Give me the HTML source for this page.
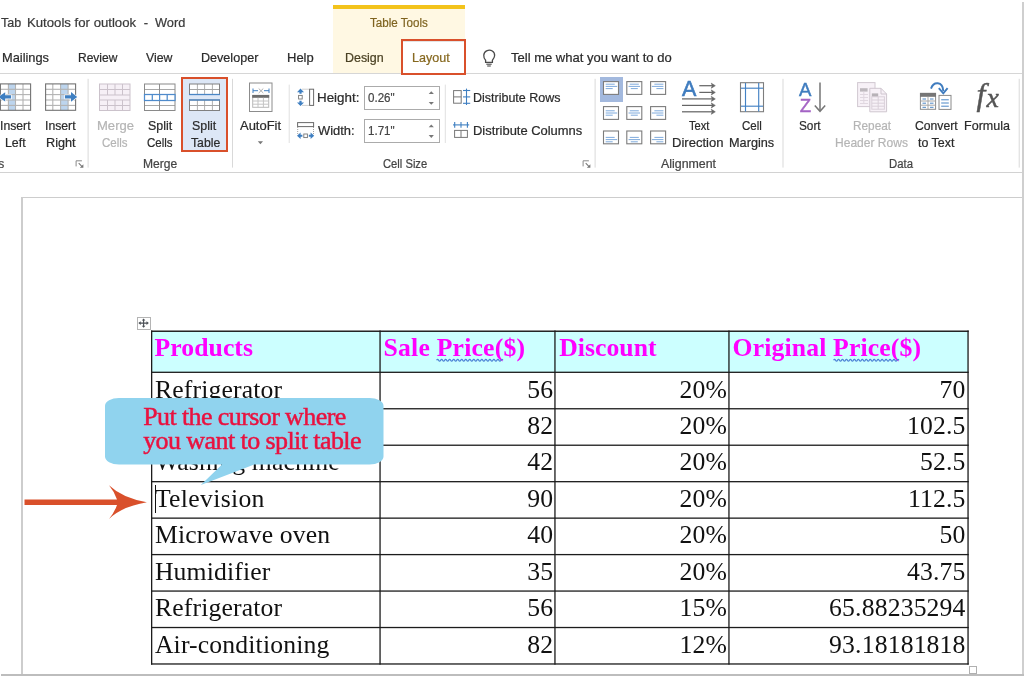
<!DOCTYPE html>
<html lang="en"><head><meta charset="utf-8"><title>Word - Split Table</title>
<style>
html,body{margin:0;padding:0;background:#fff;}
body{width:1024px;height:676px;position:relative;overflow:hidden;font-family:"Liberation Sans",sans-serif;}
.t{position:absolute;white-space:pre;line-height:1;transform-origin:0 0;-webkit-text-stroke:0.22px currentColor;}
.a{position:absolute;}
#root{position:absolute;left:0;top:0;width:1024px;height:676px;will-change:transform;}
svg{position:absolute;overflow:visible;}

.ln{position:absolute;background:#d4d4d4;}
.cell{position:absolute;white-space:pre;line-height:1;letter-spacing:0.15px;font-family:"Liberation Serif",serif;font-size:25.7px;color:#111;}
.hd{font-weight:700;color:#ff00ff;letter-spacing:0.05px;}

</style></head><body><div id="root">
<div class="a" style="left:332.5px;top:5px;width:132.5px;height:4px;background:#f3c31b;"></div>
<div class="a" style="left:332.5px;top:9px;width:132.5px;height:64px;background:#fff8e3;"></div>
<div class="a" style="left:0px;top:73px;width:1022px;height:1px;background:#d6d6d6;"></div>
<div class="a" style="left:0px;top:172px;width:1022px;height:1px;background:#d2d2d2;"></div>
<div class="a" style="left:401px;top:38.7px;width:65px;height:36px;background:#ffffff;border:2px solid #d9502b;box-sizing:border-box;"></div>
<div class="a" style="left:403px;top:40.7px;width:61px;height:1px;background:#e3e3e3;"></div>
<div class="a" style="left:1021.5px;top:2px;width:2px;height:674px;background:#cfcfcf;"></div>
<div class="a" style="left:1px;top:673.5px;width:1023px;height:2.5px;background:#bdbdbd;"></div>
<div class="a" style="left:21px;top:197px;width:1001px;height:1px;background:#cdcdcd;"></div>
<div class="a" style="left:21px;top:197px;width:1.5px;height:477px;background:#cdcdcd;"></div>
<div class="a" style="left:181px;top:77px;width:47px;height:75px;background:#dde7f6;border:2px solid #d9502b;box-sizing:border-box;"></div>
<div class="a" style="left:600px;top:77px;width:23px;height:24.5px;background:#a3b9de;"></div>
<svg style="left:0;top:0" width="1024" height="676" viewBox="0 0 1024 676"><rect x="87.60" y="78.8" width="1" height="88.8" fill="#d9d9d9"/><rect x="232.00" y="78.8" width="1" height="88.8" fill="#d9d9d9"/><rect x="594.60" y="78.8" width="1" height="88.8" fill="#d9d9d9"/><rect x="782.50" y="78.8" width="1" height="88.8" fill="#d9d9d9"/><rect x="1018.70" y="78.8" width="1" height="88.8" fill="#d9d9d9"/><rect x="288.70" y="84.6" width="1" height="58.4" fill="#e0e0e0"/><rect x="444.80" y="84.6" width="1" height="58.4" fill="#e0e0e0"/></svg>
<div class="a" style="left:364px;top:86.25px;width:76px;height:23.25px;background:#fff;border:1px solid #ababab;box-sizing:border-box;"></div>
<div class="a" style="left:364px;top:119.25px;width:76px;height:23.25px;background:#fff;border:1px solid #ababab;box-sizing:border-box;"></div>
<div class="a" style="left:151px;top:330.5px;width:817.4px;height:41.14999999999998px;background:#ccffff;"></div>
<svg style="left:0;top:0" width="1024" height="676" viewBox="0 0 1024 676"><g fill="#1c1c1c"><rect x="151" y="330.5" width="817.70" height="1.45"/><rect x="151" y="371.65" width="817.70" height="1.3"/><rect x="151" y="408.11" width="817.70" height="1.3"/><rect x="151" y="444.57" width="817.70" height="1.3"/><rect x="151" y="481.03" width="817.70" height="1.3"/><rect x="151" y="517.49" width="817.70" height="1.3"/><rect x="151" y="553.95" width="817.70" height="1.3"/><rect x="151" y="590.41" width="817.70" height="1.3"/><rect x="151" y="626.87" width="817.70" height="1.3"/><rect x="151" y="663.33" width="817.70" height="1.3"/><rect x="151" y="330.5" width="1.3" height="334.13"/><rect x="379.4" y="330.5" width="1.3" height="334.13"/><rect x="554.3" y="330.5" width="1.3" height="334.13"/><rect x="728.3" y="330.5" width="1.3" height="334.13"/><rect x="967.4" y="330.5" width="1.3" height="334.13"/></g></svg>
<div class="a" style="left:137px;top:317px;width:13.5px;height:13px;background:#fff;border:1px solid #b4b4b4;box-sizing:border-box;"></div>
<svg style="left:138.4px;top:318.4px" width="11.2" height="10.2" viewBox="0 0 10 9"><path d="M5 0.3 L6.6 2.2 H5.5 V4 H7.6 V2.9 L9.7 4.5 L7.6 6.1 V5 H5.5 V6.8 H6.6 L5 8.7 L3.4 6.8 H4.5 V5 H2.4 V6.1 L0.3 4.5 L2.4 2.9 V4 H4.5 V2.2 H3.4 Z" fill="#4a4f55"/></svg>
<div class="a" style="left:969px;top:665.5px;width:8px;height:8px;background:#fff;border:1px solid #b0b0b0;box-sizing:border-box;"></div>
<svg style="left:0;top:0" width="1024" height="676" viewBox="0 0 1024 676">
<rect x="0.4" y="83.9" width="30.200000000000003" height="26.39999999999999" fill="#fff" stroke="none" stroke-width="1" />
<rect x="8.4" y="83.9" width="7.1" height="26.39999999999999" fill="#bdd5ee" stroke="none" stroke-width="1" />
<line x1="8.4" y1="83.9" x2="8.4" y2="110.3" stroke="#b3b3b3" stroke-width="1.1" />
<line x1="15.5" y1="83.9" x2="15.5" y2="110.3" stroke="#b3b3b3" stroke-width="1.1" />
<line x1="23" y1="83.9" x2="23" y2="110.3" stroke="#b3b3b3" stroke-width="1.1" />
<line x1="0.4" y1="89.3" x2="30.6" y2="89.3" stroke="#b3b3b3" stroke-width="1.1" />
<line x1="0.4" y1="94.6" x2="30.6" y2="94.6" stroke="#b3b3b3" stroke-width="1.1" />
<line x1="0.4" y1="100" x2="30.6" y2="100" stroke="#b3b3b3" stroke-width="1.1" />
<line x1="0.4" y1="105.4" x2="30.6" y2="105.4" stroke="#b3b3b3" stroke-width="1.1" />
<rect x="0.4" y="83.9" width="30.200000000000003" height="26.39999999999999" fill="none" stroke="#737373" stroke-width="1.1" />
<path d="M11 95.2 H5.2 V92.2 L-1.8 96.9 L5.2 101.6 V98.6 H11 Z" fill="#3f7fc1" stroke="#fff" stroke-width="1.3" paint-order="stroke"/>
<rect x="45.6" y="83.9" width="29.999999999999993" height="26.39999999999999" fill="#fff" stroke="none" stroke-width="1" />
<rect x="60.6" y="83.9" width="7.499999999999993" height="26.39999999999999" fill="#bdd5ee" stroke="none" stroke-width="1" />
<line x1="52.8" y1="83.9" x2="52.8" y2="110.3" stroke="#b3b3b3" stroke-width="1.1" />
<line x1="60.6" y1="83.9" x2="60.6" y2="110.3" stroke="#b3b3b3" stroke-width="1.1" />
<line x1="68.1" y1="83.9" x2="68.1" y2="110.3" stroke="#b3b3b3" stroke-width="1.1" />
<line x1="45.6" y1="89.3" x2="75.6" y2="89.3" stroke="#b3b3b3" stroke-width="1.1" />
<line x1="45.6" y1="94.6" x2="75.6" y2="94.6" stroke="#b3b3b3" stroke-width="1.1" />
<line x1="45.6" y1="100" x2="75.6" y2="100" stroke="#b3b3b3" stroke-width="1.1" />
<line x1="45.6" y1="105.4" x2="75.6" y2="105.4" stroke="#b3b3b3" stroke-width="1.1" />
<rect x="45.6" y="83.9" width="29.999999999999993" height="26.39999999999999" fill="none" stroke="#737373" stroke-width="1.1" />
<path d="M65 95.2 H71 V92 L77.2 96.9 L71 101.8 V98.6 H65 Z" fill="#3f7fc1" stroke="#fff" stroke-width="1.3" paint-order="stroke"/>
<rect x="99.5" y="84" width="30.5" height="26.5" fill="#f6f0f6" stroke="none" stroke-width="1" />
<line x1="107.5" y1="84" x2="107.5" y2="95" stroke="#cbc2cb" stroke-width="1" />
<line x1="107.5" y1="100" x2="107.5" y2="110.5" stroke="#cbc2cb" stroke-width="1" />
<line x1="115" y1="84" x2="115" y2="95" stroke="#cbc2cb" stroke-width="1" />
<line x1="115" y1="100" x2="115" y2="110.5" stroke="#cbc2cb" stroke-width="1" />
<line x1="122.5" y1="84" x2="122.5" y2="95" stroke="#cbc2cb" stroke-width="1" />
<line x1="122.5" y1="100" x2="122.5" y2="110.5" stroke="#cbc2cb" stroke-width="1" />
<line x1="99.5" y1="89.5" x2="130" y2="89.5" stroke="#cbc2cb" stroke-width="1" />
<line x1="99.5" y1="95" x2="130" y2="95" stroke="#cbc2cb" stroke-width="1" />
<line x1="99.5" y1="100" x2="130" y2="100" stroke="#cbc2cb" stroke-width="1" />
<line x1="99.5" y1="105.5" x2="130" y2="105.5" stroke="#cbc2cb" stroke-width="1" />
<rect x="99.5" y="84" width="30.5" height="26.5" fill="none" stroke="#cbc2cb" stroke-width="1" />
<rect x="144.5" y="84" width="30.5" height="26.5" fill="#fff" stroke="none" stroke-width="1" />
<line x1="144.5" y1="89.5" x2="175" y2="89.5" stroke="#a9a9a9" stroke-width="1" />
<line x1="144.5" y1="105.5" x2="175" y2="105.5" stroke="#a9a9a9" stroke-width="1" />
<line x1="159.5" y1="84" x2="159.5" y2="110.5" stroke="#8e8e8e" stroke-width="1" />
<rect x="144.5" y="84" width="30.5" height="26.5" fill="none" stroke="#8a8a8a" stroke-width="1" />
<rect x="144.5" y="94.5" width="30.5" height="6" fill="#fff" stroke="#4f8bcb" stroke-width="1.25" />
<line x1="152.3" y1="94.5" x2="152.3" y2="100.5" stroke="#4f8bcb" stroke-width="1.25" />
<line x1="159.6" y1="94.5" x2="159.6" y2="100.5" stroke="#4f8bcb" stroke-width="1.25" />
<line x1="167.2" y1="94.5" x2="167.2" y2="100.5" stroke="#4f8bcb" stroke-width="1.25" />
<rect x="189.5" y="84" width="30" height="10.5" fill="#fff" stroke="none" stroke-width="1" />
<line x1="197.4" y1="84" x2="197.4" y2="94.5" stroke="#b0b0b0" stroke-width="1" />
<line x1="204.6" y1="84" x2="204.6" y2="94.5" stroke="#b0b0b0" stroke-width="1" />
<line x1="212.4" y1="84" x2="212.4" y2="94.5" stroke="#b0b0b0" stroke-width="1" />
<line x1="189.5" y1="89.5" x2="219.5" y2="89.5" stroke="#a5a5a5" stroke-width="1" />
<rect x="189.5" y="84" width="30" height="10.5" fill="none" stroke="#808080" stroke-width="1" />
<line x1="189" y1="94.5" x2="220" y2="94.5" stroke="#4a86c5" stroke-width="1.3" />
<rect x="189.5" y="100" width="30" height="10.5" fill="#fff" stroke="none" stroke-width="1" />
<line x1="197.4" y1="100" x2="197.4" y2="110.5" stroke="#b0b0b0" stroke-width="1" />
<line x1="204.6" y1="100" x2="204.6" y2="110.5" stroke="#b0b0b0" stroke-width="1" />
<line x1="212.4" y1="100" x2="212.4" y2="110.5" stroke="#b0b0b0" stroke-width="1" />
<line x1="189.5" y1="105.5" x2="219.5" y2="105.5" stroke="#a5a5a5" stroke-width="1" />
<rect x="189.5" y="100" width="30" height="10.5" fill="none" stroke="#808080" stroke-width="1" />
<line x1="189" y1="100" x2="220" y2="100" stroke="#4a86c5" stroke-width="1.3" />
<rect x="249.5" y="83" width="22.5" height="28.5" fill="#fff" stroke="#8c8c8c" stroke-width="1" />
<line x1="253" y1="88.5" x2="253" y2="93" stroke="#3f7fc1" stroke-width="1" />
<line x1="269" y1="88.5" x2="269" y2="93" stroke="#3f7fc1" stroke-width="1" />
<line x1="253" y1="90.7" x2="258" y2="90.7" stroke="#3f7fc1" stroke-width="1" />
<line x1="264" y1="90.7" x2="269" y2="90.7" stroke="#3f7fc1" stroke-width="1" />
<line x1="258.7" y1="88.5" x2="263.3" y2="93" stroke="#9a9a9a" stroke-width="0.8" />
<line x1="263.3" y1="88.5" x2="258.7" y2="93" stroke="#9a9a9a" stroke-width="0.8" />
<rect x="252.7" y="95.3" width="16" height="12" fill="#fff" stroke="#b9b9b9" stroke-width="1" />
<rect x="252.2" y="95" width="17" height="2.8" fill="#6d6d6d" stroke="none" stroke-width="1" />
<line x1="258" y1="97.8" x2="258" y2="107.3" stroke="#c4c4c4" stroke-width="1" />
<line x1="263.4" y1="97.8" x2="263.4" y2="107.3" stroke="#c4c4c4" stroke-width="1" />
<line x1="252.7" y1="101" x2="268.7" y2="101" stroke="#c4c4c4" stroke-width="1" />
<line x1="252.7" y1="104.2" x2="268.7" y2="104.2" stroke="#c4c4c4" stroke-width="1" />
<path d="M257.8 141.3 H263 L260.4 144.3 Z" fill="#777" stroke="none" stroke-width="1" />
<path d="M300.5 88.6 L304 92.2 H301.6 V93.8 H299.4 V92.2 H297 Z" fill="#3f7fc1" stroke="none" stroke-width="1" />
<path d="M300.5 106 L304 102.4 H301.6 V100.8 H299.4 V102.4 H297 Z" fill="#3f7fc1" stroke="none" stroke-width="1" />
<rect x="298.6" y="95.4" width="3.6" height="3.6" fill="#fff" stroke="#777" stroke-width="0.9" />
<line x1="302.5" y1="89.2" x2="309" y2="89.2" stroke="#8a8a8a" stroke-width="0.8" stroke-dasharray="1 1"/>
<line x1="302.5" y1="105.4" x2="309" y2="105.4" stroke="#8a8a8a" stroke-width="0.8" stroke-dasharray="1 1"/>
<rect x="309.6" y="89.2" width="4" height="16.2" fill="#fff" stroke="#6a6a6a" stroke-width="1" />
<rect x="297.6" y="122.6" width="16" height="4" fill="#fff" stroke="#6a6a6a" stroke-width="1" />
<line x1="297.7" y1="127" x2="297.7" y2="134" stroke="#8a8a8a" stroke-width="0.8" stroke-dasharray="1 1"/>
<line x1="313.5" y1="127" x2="313.5" y2="134" stroke="#8a8a8a" stroke-width="0.8" stroke-dasharray="1 1"/>
<path d="M297 135.8 L300.6 132.6 V134.8 H302.4 V136.8 H300.6 V139 Z" fill="#3f7fc1" stroke="none" stroke-width="1" />
<path d="M314.2 135.8 L310.6 132.6 V134.8 H308.8 V136.8 H310.6 V139 Z" fill="#3f7fc1" stroke="none" stroke-width="1" />
<rect x="303.8" y="134" width="3.6" height="3.6" fill="#fff" stroke="#777" stroke-width="0.9" />
<path d="M428.7 94.0 L431.3 91.2 L433.9 94.0 Z" fill="#777" stroke="none" stroke-width="1" />
<path d="M428.7 102.0 L431.3 104.8 L433.9 102.0 Z" fill="#777" stroke="none" stroke-width="1" />
<path d="M428.7 127.2 L431.3 124.4 L433.9 127.2 Z" fill="#777" stroke="none" stroke-width="1" />
<path d="M428.7 135.1 L431.3 137.9 L433.9 135.1 Z" fill="#777" stroke="none" stroke-width="1" />
<rect x="453.6" y="90.6" width="7.6" height="12.6" fill="none" stroke="#777" stroke-width="1" />
<line x1="453.6" y1="96.9" x2="461.2" y2="96.9" stroke="#777" stroke-width="1" />
<line x1="466.5" y1="88.6" x2="466.5" y2="105" stroke="#3f7fc1" stroke-width="1.1" />
<line x1="463" y1="90.5" x2="470.2" y2="90.5" stroke="#3f7fc1" stroke-width="1.1" />
<line x1="463" y1="96.9" x2="470.2" y2="96.9" stroke="#3f7fc1" stroke-width="1.1" />
<line x1="463" y1="103.3" x2="470.2" y2="103.3" stroke="#3f7fc1" stroke-width="1.1" />
<line x1="453" y1="124.9" x2="469.2" y2="124.9" stroke="#3f7fc1" stroke-width="1.1" />
<line x1="454.7" y1="121.9" x2="454.7" y2="127.8" stroke="#3f7fc1" stroke-width="1.1" />
<line x1="461" y1="121.9" x2="461" y2="127.8" stroke="#3f7fc1" stroke-width="1.1" />
<line x1="467.4" y1="121.9" x2="467.4" y2="127.8" stroke="#3f7fc1" stroke-width="1.1" />
<rect x="454.6" y="130.4" width="12.8" height="7" fill="none" stroke="#777" stroke-width="1" />
<line x1="461" y1="130.4" x2="461" y2="137.4" stroke="#777" stroke-width="1" />
<rect x="603.5" y="81.6" width="15" height="12.8" fill="#fff" stroke="#7c7c7c" stroke-width="1.1" />
<line x1="605.7" y1="84.19999999999999" x2="614.7" y2="84.19999999999999" stroke="#6fa0d8" stroke-width="0.9" />
<line x1="605.7" y1="86.39999999999999" x2="617.2" y2="86.39999999999999" stroke="#6fa0d8" stroke-width="0.9" />
<line x1="605.7" y1="88.6" x2="612.7" y2="88.6" stroke="#6fa0d8" stroke-width="0.9" />
<rect x="626.8" y="81.6" width="15" height="12.8" fill="#fff" stroke="#7c7c7c" stroke-width="1.1" />
<line x1="629.8" y1="84.19999999999999" x2="638.8" y2="84.19999999999999" stroke="#6fa0d8" stroke-width="0.9" />
<line x1="628.55" y1="86.39999999999999" x2="640.05" y2="86.39999999999999" stroke="#6fa0d8" stroke-width="0.9" />
<line x1="630.8" y1="88.6" x2="637.8" y2="88.6" stroke="#6fa0d8" stroke-width="0.9" />
<rect x="650.6" y="81.6" width="15" height="12.8" fill="#fff" stroke="#7c7c7c" stroke-width="1.1" />
<line x1="654.4" y1="84.19999999999999" x2="663.4" y2="84.19999999999999" stroke="#6fa0d8" stroke-width="0.9" />
<line x1="651.9" y1="86.39999999999999" x2="663.4" y2="86.39999999999999" stroke="#6fa0d8" stroke-width="0.9" />
<line x1="656.4" y1="88.6" x2="663.4" y2="88.6" stroke="#6fa0d8" stroke-width="0.9" />
<rect x="603.5" y="106.6" width="15" height="12.8" fill="#fff" stroke="#7c7c7c" stroke-width="1.1" />
<line x1="605.7" y1="110.8" x2="614.7" y2="110.8" stroke="#6fa0d8" stroke-width="0.9" />
<line x1="605.7" y1="113.0" x2="617.2" y2="113.0" stroke="#6fa0d8" stroke-width="0.9" />
<line x1="605.7" y1="115.19999999999999" x2="612.7" y2="115.19999999999999" stroke="#6fa0d8" stroke-width="0.9" />
<rect x="626.8" y="106.6" width="15" height="12.8" fill="#fff" stroke="#7c7c7c" stroke-width="1.1" />
<line x1="629.8" y1="110.8" x2="638.8" y2="110.8" stroke="#6fa0d8" stroke-width="0.9" />
<line x1="628.55" y1="113.0" x2="640.05" y2="113.0" stroke="#6fa0d8" stroke-width="0.9" />
<line x1="630.8" y1="115.19999999999999" x2="637.8" y2="115.19999999999999" stroke="#6fa0d8" stroke-width="0.9" />
<rect x="650.6" y="106.6" width="15" height="12.8" fill="#fff" stroke="#7c7c7c" stroke-width="1.1" />
<line x1="654.4" y1="110.8" x2="663.4" y2="110.8" stroke="#6fa0d8" stroke-width="0.9" />
<line x1="651.9" y1="113.0" x2="663.4" y2="113.0" stroke="#6fa0d8" stroke-width="0.9" />
<line x1="656.4" y1="115.19999999999999" x2="663.4" y2="115.19999999999999" stroke="#6fa0d8" stroke-width="0.9" />
<rect x="603.5" y="131" width="15" height="12.8" fill="#fff" stroke="#7c7c7c" stroke-width="1.1" />
<line x1="605.7" y1="137.4" x2="614.7" y2="137.4" stroke="#6fa0d8" stroke-width="0.9" />
<line x1="605.7" y1="139.6" x2="617.2" y2="139.6" stroke="#6fa0d8" stroke-width="0.9" />
<line x1="605.7" y1="141.8" x2="612.7" y2="141.8" stroke="#6fa0d8" stroke-width="0.9" />
<rect x="626.8" y="131" width="15" height="12.8" fill="#fff" stroke="#7c7c7c" stroke-width="1.1" />
<line x1="629.8" y1="137.4" x2="638.8" y2="137.4" stroke="#6fa0d8" stroke-width="0.9" />
<line x1="628.55" y1="139.6" x2="640.05" y2="139.6" stroke="#6fa0d8" stroke-width="0.9" />
<line x1="630.8" y1="141.8" x2="637.8" y2="141.8" stroke="#6fa0d8" stroke-width="0.9" />
<rect x="650.6" y="131" width="15" height="12.8" fill="#fff" stroke="#7c7c7c" stroke-width="1.1" />
<line x1="654.4" y1="137.4" x2="663.4" y2="137.4" stroke="#6fa0d8" stroke-width="0.9" />
<line x1="651.9" y1="139.6" x2="663.4" y2="139.6" stroke="#6fa0d8" stroke-width="0.9" />
<line x1="656.4" y1="141.8" x2="663.4" y2="141.8" stroke="#6fa0d8" stroke-width="0.9" />
<text x="682" y="96" font-family="'Liberation Sans',sans-serif" font-size="21.5" font-weight="400" fill="#3f7cbf" stroke="#3f7cbf" stroke-width="0.6">A</text>
<line x1="699.3" y1="85.7" x2="713" y2="85.7" stroke="#666" stroke-width="1.25" />
<path d="M711.3 83.2 L715.3 85.7 L711.3 88.2 L712.3 85.7 Z" fill="#666" stroke="#666" stroke-width="0.6" />
<line x1="699.3" y1="92.4" x2="713" y2="92.4" stroke="#666" stroke-width="1.25" />
<path d="M711.3 89.9 L715.3 92.4 L711.3 94.9 L712.3 92.4 Z" fill="#666" stroke="#666" stroke-width="0.6" />
<line x1="682" y1="98.9" x2="713" y2="98.9" stroke="#666" stroke-width="1.25" />
<path d="M711.3 96.4 L715.3 98.9 L711.3 101.4 L712.3 98.9 Z" fill="#666" stroke="#666" stroke-width="0.6" />
<line x1="682" y1="105.4" x2="713" y2="105.4" stroke="#666" stroke-width="1.25" />
<path d="M711.3 102.9 L715.3 105.4 L711.3 107.9 L712.3 105.4 Z" fill="#666" stroke="#666" stroke-width="0.6" />
<line x1="682" y1="111.8" x2="713" y2="111.8" stroke="#666" stroke-width="1.25" />
<path d="M711.3 109.3 L715.3 111.8 L711.3 114.3 L712.3 111.8 Z" fill="#666" stroke="#666" stroke-width="0.6" />
<rect x="740.5" y="82.7" width="23" height="29" fill="#fff" stroke="#7d7d7d" stroke-width="1.1" />
<line x1="745.5" y1="83" x2="745.5" y2="111.5" stroke="#4482c4" stroke-width="1.15" />
<line x1="758.7" y1="83" x2="758.7" y2="111.5" stroke="#4482c4" stroke-width="1.15" />
<line x1="741" y1="88.2" x2="763" y2="88.2" stroke="#4482c4" stroke-width="1.15" />
<line x1="741" y1="106.2" x2="763" y2="106.2" stroke="#4482c4" stroke-width="1.15" />
<text x="799" y="95.9" font-family="'Liberation Sans',sans-serif" font-size="18.6" fill="#3f7cbf" stroke="#3f7cbf" stroke-width="0.45">A</text>
<text x="799.8" y="112.1" font-family="'Liberation Sans',sans-serif" font-size="18.6" fill="#a463c4" stroke="#a463c4" stroke-width="0.45">Z</text>
<line x1="820" y1="82.5" x2="820" y2="111" stroke="#757575" stroke-width="1.5" />
<path d="M814.8 105.6 L820 111.3 L825.2 105.6" fill="none" stroke="#757575" stroke-width="1.5" />
<rect x="857.6" y="82.6" width="17.4" height="24" fill="#f7f1f7" stroke="#d1c8d1" stroke-width="1" />
<rect x="860" y="88.2" width="7.6" height="3.4" fill="#bdb8bd" stroke="none" stroke-width="1" />
<line x1="860" y1="94.5" x2="868" y2="94.5" stroke="#e0d8e0" stroke-width="1" />
<line x1="860" y1="97.5" x2="868" y2="97.5" stroke="#e0d8e0" stroke-width="1" />
<line x1="860" y1="100.5" x2="868" y2="100.5" stroke="#e0d8e0" stroke-width="1" />
<line x1="860" y1="103.5" x2="868" y2="103.5" stroke="#e0d8e0" stroke-width="1" />
<line x1="863.8" y1="91.6" x2="863.8" y2="104" stroke="#e0d8e0" stroke-width="1" />
<path d="M869.8 88.3 H881 L886.6 94 V111.8 H869.8 Z" fill="#f7f1f7" stroke="#cfc6cf" stroke-width="1" />
<path d="M881 88.3 V94 H886.6" fill="none" stroke="#cfc6cf" stroke-width="1" />
<rect x="871.8" y="93.4" width="6.4" height="3.4" fill="#b7b2b7" stroke="none" stroke-width="1" />
<rect x="871.8" y="96.8" width="12.6" height="12.4" fill="none" stroke="#d9d0d9" stroke-width="1" />
<line x1="871.8" y1="100" x2="884.4" y2="100" stroke="#d9d0d9" stroke-width="1" />
<line x1="871.8" y1="103.2" x2="884.4" y2="103.2" stroke="#d9d0d9" stroke-width="1" />
<line x1="871.8" y1="106.2" x2="884.4" y2="106.2" stroke="#d9d0d9" stroke-width="1" />
<line x1="878.2" y1="96.8" x2="878.2" y2="109.2" stroke="#d9d0d9" stroke-width="1" />
<rect x="920.4" y="93.3" width="15.2" height="16" fill="#fff" stroke="#8a8a8a" stroke-width="1" />
<rect x="920" y="93" width="16" height="3.8" fill="#767676" stroke="none" stroke-width="1" />
<line x1="928" y1="96.8" x2="928" y2="109.3" stroke="#a8a8a8" stroke-width="1" />
<line x1="920.4" y1="101" x2="935.6" y2="101" stroke="#a8a8a8" stroke-width="1" />
<line x1="920.4" y1="105.2" x2="935.6" y2="105.2" stroke="#a8a8a8" stroke-width="1" />
<line x1="922.5" y1="99" x2="926" y2="99" stroke="#4a86c5" stroke-width="1" />
<line x1="922.5" y1="103.2" x2="926" y2="103.2" stroke="#4a86c5" stroke-width="1" />
<line x1="922.5" y1="107.3" x2="926" y2="107.3" stroke="#4a86c5" stroke-width="1" />
<line x1="930" y1="99" x2="933.5" y2="99" stroke="#4a86c5" stroke-width="1" />
<line x1="930" y1="103.2" x2="933.5" y2="103.2" stroke="#4a86c5" stroke-width="1" />
<line x1="930" y1="107.3" x2="933.5" y2="107.3" stroke="#4a86c5" stroke-width="1" />
<rect x="939" y="95.4" width="12" height="14" fill="#fff" stroke="#8a8a8a" stroke-width="1" />
<line x1="941.2" y1="99.8" x2="948.8" y2="99.8" stroke="#4a86c5" stroke-width="1" />
<line x1="941.2" y1="103" x2="948.8" y2="103" stroke="#4a86c5" stroke-width="1" />
<line x1="941.2" y1="106.2" x2="948.8" y2="106.2" stroke="#4a86c5" stroke-width="1" />
<path d="M931 88.6 C933.5 81.3 942.7 81 943.3 91" fill="none" stroke="#3f7cbf" stroke-width="1.9" />
<path d="M938.8 88.2 L943.3 93.3 L947.6 88.2" fill="none" stroke="#3f7cbf" stroke-width="1.9" />
<text x="976.5" y="104.8" font-family="'Liberation Serif',serif" font-style="italic" font-size="32" fill="#555" stroke="#555" stroke-width="0.45">f</text>
<text x="986.6" y="106.8" font-family="'Liberation Serif',serif" font-style="italic" font-size="28" fill="#555" stroke="#555" stroke-width="0.45">x</text>
<path d="M76.1 166.4 V160.8 H81.89999999999999" fill="none" stroke="#8a8a8a" stroke-width="1" />
<path d="M78.69999999999999 163.2 L82.1 166.6" fill="none" stroke="#777" stroke-width="1.1" />
<path d="M83.39999999999999 164.2 V167.8 H79.8 Z" fill="#777" stroke="none" stroke-width="1" />
<path d="M583.1 166.4 V160.8 H588.9" fill="none" stroke="#8a8a8a" stroke-width="1" />
<path d="M585.7 163.2 L589.1 166.6" fill="none" stroke="#777" stroke-width="1.1" />
<path d="M590.4 164.2 V167.8 H586.8000000000001 Z" fill="#777" stroke="none" stroke-width="1" />
<path d="M485.6 60.2 C483 57.6 483 52.5 486.6 50.8 C490.8 48.8 495 51.6 494.6 55.8 C494.4 58 493 59 492.4 60.2 V62.4 H485.6 Z" fill="none" stroke="#4a4a4a" stroke-width="1.3" />
<line x1="486.3" y1="64.2" x2="491.7" y2="64.2" stroke="#4a4a4a" stroke-width="1.1" />
<line x1="487.2" y1="66" x2="490.8" y2="66" stroke="#4a4a4a" stroke-width="1.1" />
</svg>
<div class="t" style="left:1.00px;top:16.40px;font-size:13px;color:#3a3a3a;transform:scaleX(0.9648);">Tab</div>
<div class="t" style="left:27.29px;top:16.40px;font-size:13px;color:#3a3a3a;transform:scaleX(1.0133);">Kutools for outlook</div>
<div class="t" style="left:143.85px;top:16.40px;font-size:13px;color:#3a3a3a;transform:scaleX(1.0000);">-</div>
<div class="t" style="left:155.30px;top:16.40px;font-size:13px;color:#3a3a3a;transform:scaleX(0.9838);">Word</div>
<div class="t" style="left:370.20px;top:16.82px;font-size:12.5px;color:#7f6420;transform:scaleX(0.9280);">Table Tools</div>
<div class="t" style="left:1.51px;top:51.40px;font-size:13px;color:#2b2b2b;transform:scaleX(0.9855);">Mailings</div>
<div class="t" style="left:77.58px;top:51.40px;font-size:13px;color:#2b2b2b;transform:scaleX(0.9234);">Review</div>
<div class="t" style="left:146.00px;top:51.40px;font-size:13px;color:#2b2b2b;transform:scaleX(0.9456);">View</div>
<div class="t" style="left:201.03px;top:51.40px;font-size:13px;color:#2b2b2b;transform:scaleX(0.9673);">Developer</div>
<div class="t" style="left:287.00px;top:51.40px;font-size:13px;color:#2b2b2b;transform:scaleX(0.9998);">Help</div>
<div class="t" style="left:345.04px;top:51.40px;font-size:13px;color:#4a4123;transform:scaleX(0.9557);">Design</div>
<div class="t" style="left:412.43px;top:51.40px;font-size:13px;color:#86681f;transform:scaleX(0.9656);">Layout</div>
<div class="t" style="left:510.60px;top:51.40px;font-size:13px;color:#2b2b2b;transform:scaleX(1.0013);">Tell me what you want to do</div>
<div class="t" style="left:0.06px;top:118.90px;font-size:13px;color:#2b2b2b;transform:scaleX(0.9404);">Insert</div>
<div class="t" style="left:5.05px;top:135.90px;font-size:13px;color:#2b2b2b;transform:scaleX(0.9491);">Left</div>
<div class="t" style="left:44.56px;top:118.90px;font-size:13px;color:#2b2b2b;transform:scaleX(0.9404);">Insert</div>
<div class="t" style="left:45.52px;top:135.90px;font-size:13px;color:#2b2b2b;transform:scaleX(0.9752);">Right</div>
<div class="t" style="left:97.00px;top:118.90px;font-size:13px;color:#b5b5b5;transform:scaleX(1.0037);">Merge</div>
<div class="t" style="left:102.00px;top:135.90px;font-size:13px;color:#b5b5b5;transform:scaleX(0.8845);">Cells</div>
<div class="t" style="left:147.50px;top:118.90px;font-size:13px;color:#2b2b2b;transform:scaleX(0.9542);">Split</div>
<div class="t" style="left:147.00px;top:135.90px;font-size:13px;color:#2b2b2b;transform:scaleX(0.8845);">Cells</div>
<div class="t" style="left:192.00px;top:118.90px;font-size:13px;color:#2b2b2b;transform:scaleX(0.9542);">Split</div>
<div class="t" style="left:191.00px;top:135.90px;font-size:13px;color:#2b2b2b;transform:scaleX(0.9401);">Table</div>
<div class="t" style="left:239.50px;top:118.90px;font-size:13px;color:#2b2b2b;transform:scaleX(0.9983);">AutoFit</div>
<div class="t" style="left:688.90px;top:118.90px;font-size:13px;color:#2b2b2b;transform:scaleX(0.8543);">Text</div>
<div class="t" style="left:671.90px;top:135.90px;font-size:13px;color:#2b2b2b;transform:scaleX(1.0027);">Direction</div>
<div class="t" style="left:742.40px;top:118.90px;font-size:13px;color:#2b2b2b;transform:scaleX(0.8842);">Cell</div>
<div class="t" style="left:728.92px;top:135.90px;font-size:13px;color:#2b2b2b;transform:scaleX(0.9773);">Margins</div>
<div class="t" style="left:798.50px;top:118.90px;font-size:13px;color:#2b2b2b;transform:scaleX(0.9080);">Sort</div>
<div class="t" style="left:852.84px;top:118.90px;font-size:13px;color:#b5b5b5;transform:scaleX(0.9078);">Repeat</div>
<div class="t" style="left:834.57px;top:135.90px;font-size:13px;color:#b5b5b5;transform:scaleX(0.9265);">Header Rows</div>
<div class="t" style="left:915.00px;top:118.90px;font-size:13px;color:#2b2b2b;transform:scaleX(0.9367);">Convert</div>
<div class="t" style="left:918.00px;top:135.90px;font-size:13px;color:#2b2b2b;transform:scaleX(0.9565);">to Text</div>
<div class="t" style="left:963.79px;top:118.90px;font-size:13px;color:#2b2b2b;transform:scaleX(0.9642);">Formula</div>
<div class="t" style="left:316.97px;top:90.90px;font-size:13px;color:#2b2b2b;transform:scaleX(1.0296);">Height:</div>
<div class="t" style="left:318.00px;top:123.90px;font-size:13px;color:#2b2b2b;transform:scaleX(0.9937);">Width:</div>
<div class="t" style="left:368.00px;top:90.90px;font-size:13px;color:#444;transform:scaleX(0.8910);">0.26&quot;</div>
<div class="t" style="left:368.00px;top:123.90px;font-size:13px;color:#444;transform:scaleX(0.8910);">1.71&quot;</div>
<div class="t" style="left:472.79px;top:90.90px;font-size:13px;color:#2b2b2b;transform:scaleX(0.9611);">Distribute Rows</div>
<div class="t" style="left:472.76px;top:123.90px;font-size:13px;color:#2b2b2b;transform:scaleX(0.9948);">Distribute Columns</div>
<div class="t" style="left:-1.75px;top:157.74px;font-size:12px;color:#444;transform:scaleX(1.0000);">s</div>
<div class="t" style="left:142.50px;top:157.74px;font-size:12px;color:#444;transform:scaleX(1.0047);">Merge</div>
<div class="t" style="left:383.00px;top:157.74px;font-size:12px;color:#444;transform:scaleX(0.9334);">Cell Size</div>
<div class="t" style="left:661.25px;top:157.74px;font-size:12px;color:#444;transform:scaleX(1.0319);">Alignment</div>
<div class="t" style="left:888.75px;top:157.74px;font-size:12px;color:#444;transform:scaleX(0.9445);">Data</div>
<div class="t" style="left:143.20px;top:403.93px;font-size:26px;color:#e9123f;letter-spacing:-0.600px;font-family:'Liberation Serif',serif;z-index:5;-webkit-text-stroke:0.5px #e9123f">Put the cursor where</div>
<div class="t" style="left:143.20px;top:427.73px;font-size:26px;color:#e9123f;letter-spacing:-0.579px;font-family:'Liberation Serif',serif;z-index:5;-webkit-text-stroke:0.5px #e9123f">you want to split table</div>
<div class="cell hd" style="left:154.6px;top:335.08px">Products</div>
<div class="cell hd" style="left:383.6px;letter-spacing:0.2px;top:335.08px">Sale <span class="sq">Price($</span>)</div>
<div class="cell hd" style="left:559.2px;top:335.08px">Discount</div>
<div class="cell hd" style="left:732.5px;letter-spacing:0.15px;top:335.08px">Original <span class="sq">Price($</span>)</div>
<div class="cell " style="left:154.9px;top:376.78px">Refrigerator</div>
<div class="cell " style="right:470.79999999999995px;top:376.78px;">56</div>
<div class="cell " style="right:297px;top:376.78px;">20%</div>
<div class="cell " style="right:58.39999999999998px;top:376.78px;">70</div>
<div class="cell " style="left:154.9px;top:412.74px">Air-conditioning</div>
<div class="cell " style="right:470.79999999999995px;top:412.74px;">82</div>
<div class="cell " style="right:297px;top:412.74px;">20%</div>
<div class="cell " style="right:58.39999999999998px;top:412.74px;">102.5</div>
<div class="cell " style="left:154.9px;top:449.20px">Washing machine</div>
<div class="cell " style="right:470.79999999999995px;top:449.20px;">42</div>
<div class="cell " style="right:297px;top:449.20px;">20%</div>
<div class="cell " style="right:58.39999999999998px;top:449.20px;">52.5</div>
<div class="cell " style="left:154.9px;top:485.66px;letter-spacing:0.32px">Television</div>
<div class="cell " style="right:470.79999999999995px;top:485.66px;">90</div>
<div class="cell " style="right:297px;top:485.66px;">20%</div>
<div class="cell " style="right:58.39999999999998px;top:485.66px;">112.5</div>
<div class="cell " style="left:154.9px;top:522.12px">Microwave oven</div>
<div class="cell " style="right:470.79999999999995px;top:522.12px;">40</div>
<div class="cell " style="right:297px;top:522.12px;">20%</div>
<div class="cell " style="right:58.39999999999998px;top:522.12px;">50</div>
<div class="cell " style="left:154.9px;top:558.58px">Humidifier</div>
<div class="cell " style="right:470.79999999999995px;top:558.58px;">35</div>
<div class="cell " style="right:297px;top:558.58px;">20%</div>
<div class="cell " style="right:58.39999999999998px;top:558.58px;">43.75</div>
<div class="cell " style="left:154.9px;top:595.04px">Refrigerator</div>
<div class="cell " style="right:470.79999999999995px;top:595.04px;">56</div>
<div class="cell " style="right:297px;top:595.04px;">15%</div>
<div class="cell " style="right:58.39999999999998px;top:595.04px;">65.88235294</div>
<div class="cell " style="left:154.9px;top:631.50px">Air-conditioning</div>
<div class="cell " style="right:470.79999999999995px;top:631.50px;">82</div>
<div class="cell " style="right:297px;top:631.50px;">12%</div>
<div class="cell " style="right:58.39999999999998px;top:631.50px;">93.18181818</div>
<svg style="left:0;top:0;z-index:3" width="1024" height="676" viewBox="0 0 1024 676"><path d="M436.6 360.2 q1.01 -1.9 2.01 0 t2.01 0 t2.01 0 t2.01 0 t2.01 0 t2.01 0 t2.01 0 t2.01 0 t2.01 0 t2.01 0 t2.01 0 t2.01 0 t2.01 0 t2.01 0 t2.01 0 t2.01 0 t2.01 0 t2.01 0 t2.01 0 t2.01 0 t2.01 0 t2.01 0 t2.01 0 t2.01 0 t2.01 0 t2.01 0 t2.01 0 t2.01 0 t2.01 0 t2.01 0 t2.01 0 t2.01 0 t2.01 0" fill="none" stroke="#4d84d6" stroke-width="1.25"/><path d="M833.6 360.2 q0.99 -1.9 1.98 0 t1.98 0 t1.98 0 t1.98 0 t1.98 0 t1.98 0 t1.98 0 t1.98 0 t1.98 0 t1.98 0 t1.98 0 t1.98 0 t1.98 0 t1.98 0 t1.98 0 t1.98 0 t1.98 0 t1.98 0 t1.98 0 t1.98 0 t1.98 0 t1.98 0 t1.98 0 t1.98 0 t1.98 0 t1.98 0 t1.98 0 t1.98 0 t1.98 0 t1.98 0 t1.98 0 t1.98 0 t1.98 0" fill="none" stroke="#4d84d6" stroke-width="1.25"/></svg>
<div class="a" style="left:155px;top:484.5px;width:1px;height:28px;background:#111"></div>
<svg style="left:0;top:0;z-index:4" width="1024" height="676" viewBox="0 0 1024 676">
<path d="M119 398 H369.5 A14 8 0 0 1 383.5 406 V456.6 A14 8 0 0 1 369.5 464.6 H254 L200.8 485.1 L222 464.6 H119 A14 8 0 0 1 105 456.6 V406 A14 8 0 0 1 119 398 Z" fill="#90d3ee"/>
<path d="M24.5 499.4 H117 Q114.5 492 109 485.3 Q122.5 498.2 146.9 502.2 Q122.5 506.2 109 518.9 Q114.5 512.3 117 505 H24.5 Z" fill="#d9502b"/>
</svg>
</div></body></html>
